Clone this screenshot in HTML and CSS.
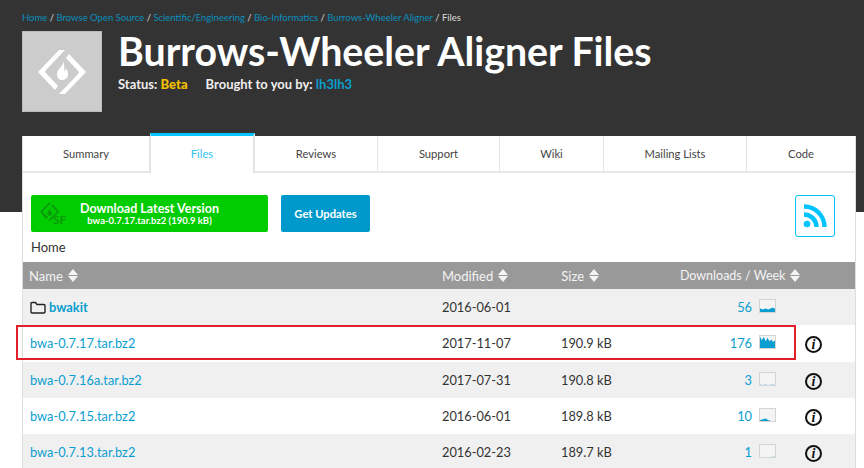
FILE: index.html
```html
<!DOCTYPE html>
<html lang="en">
<head>
  <meta charset="UTF-8" />
  <title>Burrows-Wheeler Aligner Files</title>
  <link rel="stylesheet" href="styles.css">
</head>
<body>
  <header class="top">
    <nav class="crumbs">
      <a href="#">Home</a> / <a href="#">Browse Open Source</a> / <a href="#">Scientific/Engineering</a> / <a href="#">Bio-Informatics</a> / <a href="#">Burrows-Wheeler Aligner</a> / Files
    </nav>
    <div class="project">
      <div class="logo">
        <svg width="48" height="44" viewBox="0 0 48 44">
          <path fill="#fff" d="M21 0h6L8 20l-1 2 13 14-3 4L0 22z"/>
          <path fill="#fff" d="M27 44h-6l19-20 1-2-13-14 3-4 17 18z"/>
          <path fill="#fff" d="M25 11c1 5-6 8-6 13 0 4 2 6 5 6s6-2 6-6c0-3-1-4-2-6 0 2-1 3-2 3 1-3 0-7-1-10z"/>
        </svg>
      </div>
      <div class="project-text">
        <h1>Burrows-Wheeler Aligner Files</h1>
        <p class="meta">
          <span class="status">Status: <b>Beta</b></span>
          <span>Brought to you by: <a href="#">lh3lh3</a></span>
        </p>
      </div>
    </div>
  </header>

  <main class="content">
    <div class="tabs">
      <a class="tab t-summary" href="#">Summary</a>
      <a class="tab t-files active" href="#">Files</a>
      <a class="tab t-reviews" href="#">Reviews</a>
      <a class="tab t-support" href="#">Support</a>
      <a class="tab t-wiki" href="#">Wiki</a>
      <a class="tab t-lists" href="#">Mailing Lists</a>
      <a class="tab t-code" href="#">Code</a>
    </div>

    <div class="actions">
      <a class="btn-download" href="#">
        <svg class="sf-mark" width="21" height="21" viewBox="0 0 26 26">
          <path fill="#0a9a0a" d="M11 1h3L4 11l-1 1 7 7-2 2-8-9z"/>
          <path fill="#0a9a0a" d="M13 23h-3l10-10 1-1-7-7 2-2 8 9z"/>
          <path fill="#0a9a0a" d="M12 7c1 3-3 4-3 7 0 2 1 3 3 3s3-1 3-3c0-1-1-2-1-3 0 1-1 1-1 1 0-2 0-3-1-5z"/>
        </svg>
        <span class="sf-text">SF</span>
        <span class="big">Download Latest Version</span>
        <span class="small">bwa-0.7.17.tar.bz2 (190.9 kB)</span>
      </a>
      <a class="btn-updates" href="#">Get Updates</a>
      <a class="btn-rss" href="#">
        <svg width="24" height="24" viewBox="0 0 24 24">
          <circle cx="4" cy="20" r="3.3" fill="#00c4ff"/>
          <path fill="none" stroke="#00c4ff" stroke-width="4.4" d="M1 10.500a12.500 12.500 0 0 1 12.500 12.500"/>
          <path fill="none" stroke="#00c4ff" stroke-width="4.4" d="M1 2.500a20.500 20.500 0 0 1 20.500 20.500"/>
        </svg>
      </a>
    </div>

    <div class="path">Home</div>

    <div class="files">
      <div class="row head">
        <span class="c-name">Name <i class="sort"></i></span>
        <span class="c-mod">Modified <i class="sort"></i></span>
        <span class="c-size">Size <i class="sort"></i></span>
        <span class="c-dl">Downloads / Week <i class="sort"></i></span>
      </div>

      <div class="row">
        <span class="c-name">
          <svg class="folder" width="16" height="13" viewBox="0 0 16 13">
            <path fill="none" stroke="#222" stroke-width="1.4" d="M1 2.500a1 1 0 0 1 1-1h3.500l1.500 2h7a1 1 0 0 1 1 1v6.500a1 1 0 0 1-1 1H2a1 1 0 0 1-1-1z"/>
          </svg>
          <a class="dir" href="#">bwakit</a>
        </span>
        <span class="c-mod">2016-06-01</span>
        <span class="c-size"></span>
        <span class="c-num"><a href="#">56</a></span>
        <svg class="spark" viewBox="0 0 16 14" preserveAspectRatio="none"><path fill="#0a9ed0" d="M0 14v-4l3 1 3-1 3 1 4-2 3 1v4z"/></svg>
      </div>

      <div class="row">
        <span class="c-name"><a href="#">bwa-0.7.17.tar.bz2</a></span>
        <span class="c-mod">2017-11-07</span>
        <span class="c-size">190.9 kB</span>
        <span class="c-num"><a href="#">176</a></span>
        <svg class="spark" viewBox="0 0 16 14" preserveAspectRatio="none"><path fill="#0a9ed0" d="M0 14V1l2 4 2-4 2 5 2-4 2 4 2-2 2 3 2-2v9z"/></svg>
        <span class="info">i</span>
      </div>

      <div class="row">
        <span class="c-name"><a href="#">bwa-0.7.16a.tar.bz2</a></span>
        <span class="c-mod">2017-07-31</span>
        <span class="c-size">190.8 kB</span>
        <span class="c-num"><a href="#">3</a></span>
        <svg class="spark" viewBox="0 0 16 14" preserveAspectRatio="none"><path fill="#8ccde6" d="M0 14v-1l2 1 4-1 3 1 4-1 3 1z"/></svg>
        <span class="info">i</span>
      </div>

      <div class="row">
        <span class="c-name"><a href="#">bwa-0.7.15.tar.bz2</a></span>
        <span class="c-mod">2016-06-01</span>
        <span class="c-size">189.8 kB</span>
        <span class="c-num"><a href="#">10</a></span>
        <svg class="spark" viewBox="0 0 16 14" preserveAspectRatio="none"><path fill="#0a9ed0" d="M0 14v-1l3-1 3-1 3 2 3 1z"/></svg>
        <span class="info">i</span>
      </div>

      <div class="row">
        <span class="c-name"><a href="#">bwa-0.7.13.tar.bz2</a></span>
        <span class="c-mod">2016-02-23</span>
        <span class="c-size">189.7 kB</span>
        <span class="c-num"><a href="#">1</a></span>
        <svg class="spark" viewBox="0 0 16 14" preserveAspectRatio="none"><path fill="#8ccde6" d="M12 14l2-1 2 1z"/></svg>
        <span class="info">i</span>
      </div>

      <div class="highlight"></div>
    </div>
  </main>
</body>
</html>
```

FILE: styles.css
```css
html, body {
  height: 468px;
  overflow: hidden;
}

body {
  margin: 0;
  background: #fff;
  color: #333;
  font-family: Lato, "Open Sans", sans-serif;
  font-size: 13px;
}

a {
  color: #0a9ed0;
  text-decoration: none;
}

.top {
  height: 212px;
  box-sizing: border-box;
  padding: 11px 0 0 22px;
  background: #333;
  color: #fff;
}

.crumbs {
  font-size: 9.500px;
  line-height: 13px;
  color: #ddd;
}

.crumbs a {
  color: #0a8fbe;
}

.project {
  display: flex;
  gap: 16px;
  margin-top: 7px;
}

.logo {
  box-sizing: border-box;
  width: 80px;
  height: 81px;
  background: #ccc;
  border: 1px solid #bbb;
  display: flex;
  align-items: center;
  justify-content: center;
}

.project-text h1 {
  margin: -3px 0 0;
  font-size: 39.300px;
  font-weight: 700;
  line-height: 46px;
}

.meta {
  margin: 2px 0 0;
  font-size: 13px;
  font-weight: 700;
  line-height: 16px;
  display: flex;
  gap: 18px;
  color: #eee;
}

.meta b {
  color: #f5c000;
}

.content {
  position: relative;
  box-sizing: border-box;
  width: 834px;
  margin: -76px 0 0 22px;
  background: #fff;
  border-left: 1px solid #ddd;
  border-right: 1px solid #ddd;
}

.tabs {
  display: flex;
  height: 35px;
  background: #fff;
  border-bottom: 2px solid #e8e8e8;
}

.tab {
  box-sizing: border-box;
  height: 35px;
  line-height: 36px;
  text-align: center;
  color: #444;
  font-size: 11.200px;
  border-right: 1px solid #e4e4e4;
}

.t-summary { width: 127px; }
.t-files { width: 105px; }
.t-reviews { width: 123px; }
.t-support { width: 122px; }
.t-wiki { width: 104px; }
.t-lists { width: 143px; }
.t-code { width: 108px; border-right: 0; }

.tab.active {
  height: 40px;
  margin-top: -3px;
  line-height: 36px;
  color: #33c5f5;
  background: #fff;
  border-top: 3px solid #00c4ff;
  border-left: 1px solid #e4e4e4;
  border-right: 2px solid #e4e4e4;
  position: relative;
}

.actions {
  display: flex;
  align-items: flex-start;
  padding: 22px 20px 0 8px;
  height: 44px;
}

.btn-download {
  position: relative;
  width: 237px;
  height: 37px;
  box-sizing: border-box;
  padding-top: 7px;
  background: #00cc00;
  border-radius: 2px;
  color: #fff;
  text-align: center;
  font-weight: 700;
  display: flex;
  flex-direction: column;
}

.big {
  font-size: 12.500px;
  line-height: 13px;
}

.small {
  font-size: 9.500px;
  line-height: 11px;
}

.sf-mark {
  position: absolute;
  left: 9px;
  top: 7px;
}

.sf-text {
  position: absolute;
  left: 22px;
  top: 19px;
  font-size: 12px;
  line-height: 12px;
  color: #0a9a0a;
}

.btn-updates {
  width: 89px;
  height: 37px;
  margin-left: 13px;
  line-height: 37px;
  text-align: center;
  background: #0099cc;
  color: #fff;
  border-radius: 2px;
  font-size: 11.200px;
  font-weight: 700;
}

.btn-rss {
  margin-left: auto;
  width: 38px;
  height: 40px;
  border: 1px solid #00c4ff;
  border-radius: 3px;
  display: flex;
  align-items: center;
  justify-content: center;
}

.path {
  position: relative;
  top: -2px;
  height: 23px;
  box-sizing: border-box;
  padding: 2px 0 0 8px;
  font-size: 13px;
  line-height: 16px;
}

.files {
  position: relative;
}

.row {
  display: flex;
  align-items: center;
  height: 36.250px;
  font-size: 12.800px;
  background: #fff;
}

.row:nth-child(even) {
  background: #f0f0f0;
}

.row.head {
  height: 27px;
  font-size: 13px;
  background: #999;
  color: #f4f4f4;
}

.row > span {
  box-sizing: border-box;
}

.head > span {
  display: flex;
  align-items: center;
  gap: 5px;
}

.c-name {
  width: 419px;
  padding-left: 7px;
  display: flex;
  align-items: center;
  gap: 3px;
}

.head .c-name {
  padding-left: 6px;
}

.c-mod {
  width: 119px;
}

.c-size {
  width: 98px;
}

.head .c-mod {
  padding-left: 2px;
}

.head .c-size {
  padding-left: 3px;
}

.c-dl {
  width: 200px;
  padding-left: 24px;
  font-size: 12.500px;
}

.c-num {
  width: 93px;
  text-align: right;
}

.dir {
  font-weight: 700;
}

.sort {
  display: flex;
  flex-direction: column;
  gap: 1px;
}

.sort::before,
.sort::after {
  content: "";
  border-left: 5px solid transparent;
  border-right: 5px solid transparent;
}

.sort::before {
  border-bottom: 6px solid #f4f4f4;
}

.sort::after {
  border-top: 6px solid #f4f4f4;
}

.spark {
  box-sizing: border-box;
  width: 17px;
  height: 14px;
  margin: -2px 0 0 7px;
  background: #f4f4f4;
  border: 1px solid #d4d4d4;
}

.info {
  box-sizing: border-box;
  width: 17px;
  height: 17px;
  margin: 3px 0 0 29px;
  border: 2px solid #111;
  border-radius: 50%;
  color: #111;
  font-family: "Liberation Serif", serif;
  font-style: italic;
  font-weight: 700;
  font-size: 14px;
  line-height: 13px;
  text-align: center;
}

.highlight {
  position: absolute;
  left: -7px;
  top: 63px;
  width: 780px;
  height: 35px;
  box-sizing: border-box;
  border: 2px solid #e2202c;
}
```
